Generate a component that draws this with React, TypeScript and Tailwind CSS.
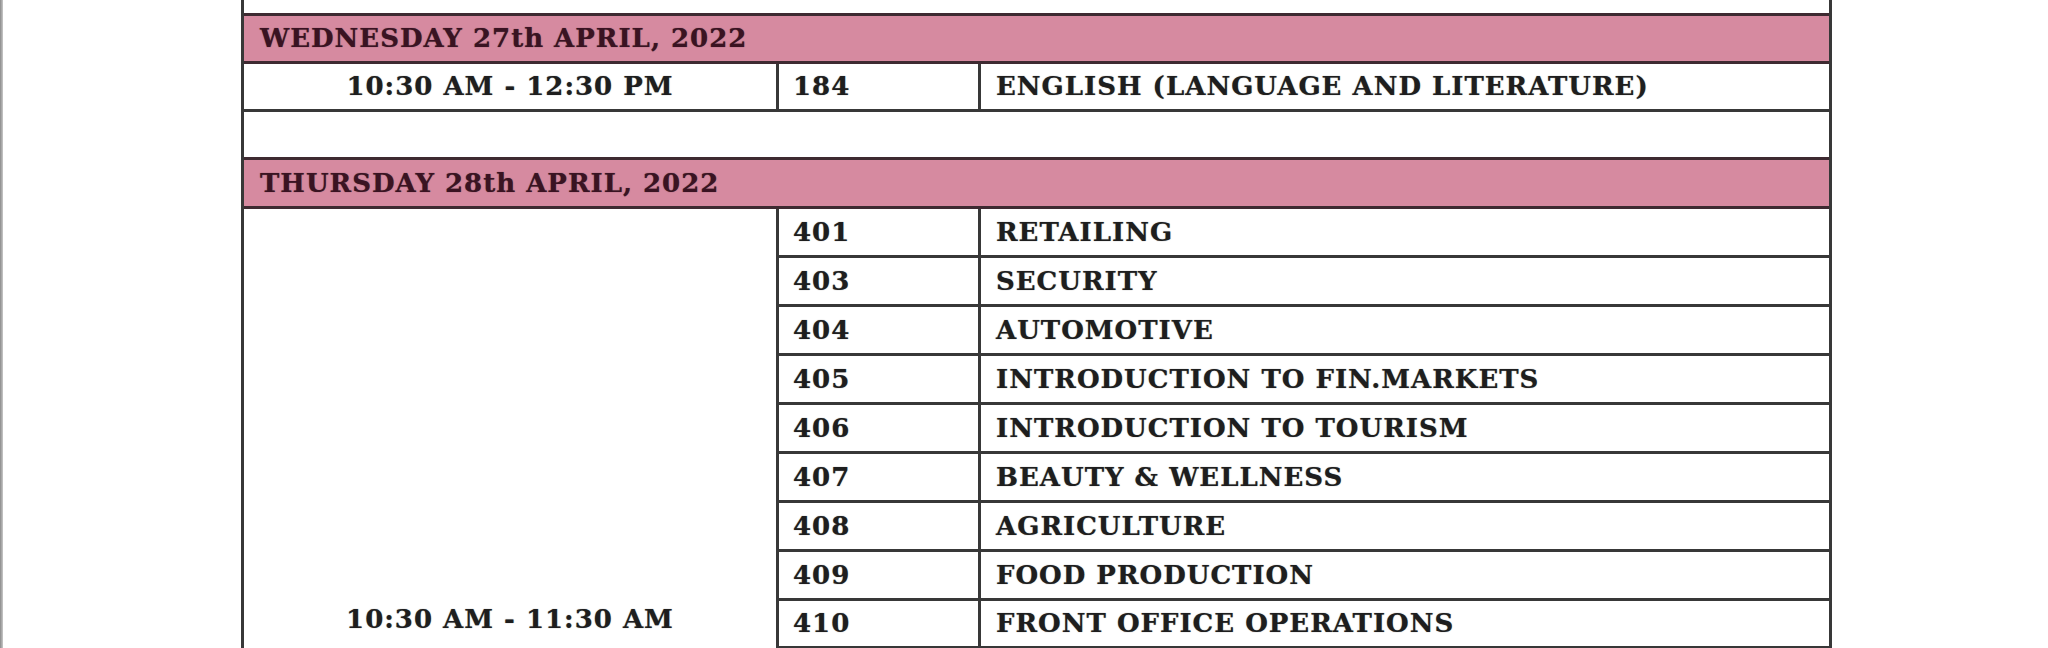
const thursday = [
  { code: "401", name: "RETAILING" },
  { code: "403", name: "SECURITY" },
  { code: "404", name: "AUTOMOTIVE" },
  { code: "405", name: "INTRODUCTION TO FIN.MARKETS" },
  { code: "406", name: "INTRODUCTION TO TOURISM" },
  { code: "407", name: "BEAUTY & WELLNESS" },
  { code: "408", name: "AGRICULTURE" },
  { code: "409", name: "FOOD PRODUCTION" },
  { code: "410", name: "FRONT OFFICE OPERATIONS" },
];

function DayHeader({ label, h }: { label: string; h: string }) {
  return (
    <div className={`${h} flex items-center border-b-[3px] border-[#3e2a31] bg-[#d68aa0] pl-[16px] text-[#3a1322]`}>
      {label}
    </div>
  );
}

export default function App() {
  return (
    <div
      className="flex h-[648px] w-[2048px] overflow-hidden bg-white text-[26px] font-bold tracking-[1px] text-[#1e1e1e] [text-shadow:0_0_1px_rgba(0,0,0,0.55)]"
      style={{ fontFamily: '"DejaVu Serif", "Liberation Serif", serif' }}
    >
      <div className="w-[3px] shrink-0 bg-gradient-to-r from-[#8a8a8a] to-[#c9c9c9]" />

      <div className="ml-[238px] flex w-[1591px] flex-col border-x-[3px] border-[#383838]">
        {/* tail of the previous block */}
        <div className="h-[16px] shrink-0 border-b-[3px] border-[#3e2a31]" />

        <DayHeader label="WEDNESDAY 27th APRIL, 2022" h="h-[48px] shrink-0" />

        <div className="flex h-[48px] shrink-0 border-b-[3px] border-[#383838]">
          <div className="flex w-[535px] shrink-0 items-center justify-center border-r-[3px] border-[#383838]">
            10:30 AM - 12:30 PM
          </div>
          <div className="flex w-[202px] shrink-0 items-center border-r-[3px] border-[#383838] pl-[14px]">184</div>
          <div className="flex flex-1 items-center pl-[15px]">ENGLISH (LANGUAGE AND LITERATURE)</div>
        </div>

        <div className="h-[48px] shrink-0 border-b-[3px] border-[#3e2a31]" />

        <DayHeader label="THURSDAY 28th APRIL, 2022" h="h-[49px] shrink-0" />

        <div className="flex flex-1">
          {/* merged time cell, continues below the fold */}
          <div className="flex w-[535px] shrink-0 flex-col justify-end border-r-[3px] border-[#383838] pb-[6px]">
            <div className="flex h-[48px] items-center justify-center">10:30 AM - 11:30 AM</div>
          </div>
          <div className="flex flex-1 flex-col">
            {thursday.map((row, i) => (
              <div
                key={row.code}
                className={`flex ${i === thursday.length - 1 ? "h-[48px]" : "h-[49px]"} shrink-0 border-b-[3px] border-[#383838]`}
              >
                <div className="flex w-[202px] shrink-0 items-center border-r-[3px] border-[#383838] pl-[14px]">
                  {row.code}
                </div>
                <div className="flex flex-1 items-center pl-[15px]">{row.name}</div>
              </div>
            ))}
          </div>
        </div>
      </div>
    </div>
  );
}
